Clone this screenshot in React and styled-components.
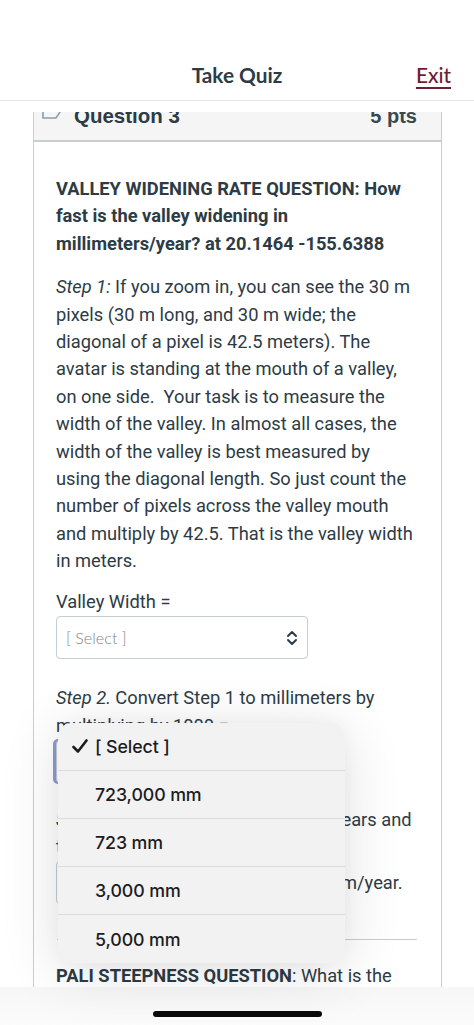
import React from 'react'
import styled, { createGlobalStyle } from 'styled-components'

const GlobalStyle = createGlobalStyle`
  html, body {
    margin: 0;
    padding: 0;
    background: #ffffff;
  }
  * {
    box-sizing: border-box;
  }
`

const Screen = styled.div`
  position: relative;
  width: 474px;
  height: 1025px;
  display: flex;
  flex-direction: column;
  overflow: hidden;
  background: #ffffff;
  color: #2d3b45;
`

const StatusSpace = styled.div`
  height: 50px;
  flex-shrink: 0;
`

const Header = styled.header`
  height: 51px;
  flex-shrink: 0;
  display: grid;
  grid-template-columns: 1fr auto 1fr;
  align-items: center;
  padding: 0 23px 0 23px;
  border-bottom: 1px solid #e4e6e8;
`

const HeaderTitle = styled.h1`
  grid-column: 2;
  margin: 0;
  font-family: Lato, 'Liberation Sans', sans-serif;
  font-weight: 700;
  font-size: 20.8px;
  color: #2d3b45;
  padding-bottom: 1px;
`

const ExitLink = styled.a`
  grid-column: 3;
  justify-self: end;
  font-family: Lato, 'Liberation Sans', sans-serif;
  font-size: 20.8px;
  font-weight: 500;
  color: #6f1d30;
  text-decoration: underline;
  text-decoration-thickness: 2px;
  text-underline-offset: 4px;
  padding-bottom: 1px;
`

const Gutter = styled.div`
  height: 11px;
  flex-shrink: 0;
  background: #ffffff;
`

const Viewport = styled.main`
  flex: 1;
  overflow: hidden;
`

/* content is scrolled: the top of the question header sits under the bar */
const Scrolled = styled.div`
  margin-top: -20px;
`

const Card = styled.section`
  margin: 0 32px 0 33px;
  border: 1px solid #c7cdd1;
  border-bottom: none;
`

const CardHeader = styled.div`
  height: 49px;
  display: flex;
  align-items: center;
  gap: 10px;
  padding: 0 24px 1px 8px;
  background: #f5f5f5;
  border-bottom: 2px solid #c7cdd1;
  font-family: 'Liberation Sans', Arial, sans-serif;
  font-weight: 700;
  font-size: 20.5px;
  color: #2d3b45;
`

const QuestionName = styled.span`
  flex: 1;
`

const Points = styled.span`
  font-size: 20px;
  color: #3b4850;
`

const CardBody = styled.div`
  padding: 33px 24px 0 22px;
  font-family: Roboto, 'Liberation Sans', sans-serif;
  font-size: 18.3px;
  line-height: 27.4px;
  color: #2d3b45;
`

const Para = styled.p`
  margin: 0 0 ${(p) => p.$gap ?? 15}px;
  font-weight: ${(p) => (p.$bold ? 700 : 400)};
`

const Label = styled.div`
  margin-bottom: 1px;
`

const SelectBox = styled.div`
  width: ${(p) => p.$width}px;
  height: 43px;
  flex-shrink: 0;
  display: ${(p) => (p.$inline ? 'inline-flex' : 'flex')};
  align-items: center;
  justify-content: space-between;
  padding: 0 9px 0 9px;
  border: 1px solid #c7cdd1;
  border-radius: 4px;
  background: #ffffff;
  font-family: Lato, 'Liberation Sans', sans-serif;
  font-size: 16.2px;
  font-weight: 300;
  color: #7f858a;
  vertical-align: middle;
  box-shadow: ${(p) => (p.$focused ? '-2px 0 0 1px #8a9bd6' : 'none')};
  margin-bottom: ${(p) => p.$after ?? 0}px;
`

const InlineRow = styled.div`
  display: flex;
  align-items: center;
  gap: 12px;
  margin-bottom: 35px;
`

const Rule = styled.hr`
  border: none;
  border-top: 1px solid #c7cdd1;
  margin: 0 0 22px 1px;
`

const Strong = styled.strong`
  font-weight: 700;
`

const Menu = styled.ul`
  position: absolute;
  left: 58px;
  top: 723px;
  width: 287px;
  margin: 0;
  padding: 0;
  list-style: none;
  border-radius: 14px;
  background: #f2f2f3;
  box-shadow: 0 8px 60px rgba(0, 0, 0, 0.12), 0 0 18px rgba(0, 0, 0, 0.04);
  overflow: hidden;
`

const MenuItem = styled.li`
  height: 48px;
  display: flex;
  align-items: center;
  padding-left: 14px;
  gap: 7px;
  border-bottom: ${(p) => (p.$last ? 'none' : '1px solid #dcdcde')};
  font-family: Inter, 'Liberation Sans', sans-serif;
  font-size: 17.8px;
  font-weight: 500;
  color: #1c1c1e;
  letter-spacing: -0.1px;
`

const CheckSlot = styled.span`
  width: 16px;
  display: flex;
  justify-content: center;
`

const BottomBar = styled.div`
  height: 38px;
  flex-shrink: 0;
  display: flex;
  justify-content: center;
  align-items: flex-end;
  padding-bottom: 8px;
  background: linear-gradient(#f7f7f7, #fbfbfb);
`

const HomeIndicator = styled.div`
  width: 169px;
  height: 6px;
  border-radius: 3px;
  background: #0a0a0a;
`

const FlagIcon = () => (
  <svg width="22" height="22" viewBox="0 0 22 22" fill="none">
    <path d="M1 0 V13 H14 L20 4" stroke="#8d9ca8" strokeWidth="1.6" />
  </svg>
)

const UpDownIcon = () => (
  <svg width="12" height="16" viewBox="0 0 12 16" fill="none">
    <polyline points="2,6 6,2 10,6" stroke="#2d3b45" strokeWidth="2" strokeLinecap="round" strokeLinejoin="round" />
    <polyline points="2,10 6,14 10,10" stroke="#2d3b45" strokeWidth="2" strokeLinecap="round" strokeLinejoin="round" />
  </svg>
)

const CheckIcon = () => (
  <svg width="16" height="15" viewBox="0 0 16 15" fill="none">
    <path d="M1.5 8 L6 12.5 L14.5 1.5" stroke="#1c1c1e" strokeWidth="2.6" strokeLinecap="round" strokeLinejoin="round" />
  </svg>
)

const options = ['[ Select ]', '723,000 mm', '723 mm', '3,000 mm', '5,000 mm']

export default function App() {
  return (
    <Screen>
      <GlobalStyle />
      <StatusSpace />
      <Header>
        <HeaderTitle>Take Quiz</HeaderTitle>
        <ExitLink>Exit</ExitLink>
      </Header>
      <Gutter />
      <Viewport>
        <Scrolled>
          <Card>
            <CardHeader>
              <FlagIcon />
              <QuestionName>Question 3</QuestionName>
              <Points>5 pts</Points>
            </CardHeader>
            <CardBody>
              <Para $bold $gap={16}>
                VALLEY WIDENING RATE QUESTION: How fast is the valley widening in millimeters/year? at 20.1464 -155.6388
              </Para>
              <Para $gap={13}>
                <em>Step 1:</em> If you zoom in, you can see the 30 m pixels (30 m long, and 30 m wide; the diagonal of a
                pixel is 42.5 meters). The avatar is standing at the mouth of a valley, on one side.&nbsp; Your task is to
                measure the width of the valley. In almost all cases, the width of the valley is best measured by using the
                diagonal length. So just count the number of pixels across the valley mouth and multiply by 42.5. That is
                the valley width in meters.
              </Para>
              <Label>Valley Width =</Label>
              <SelectBox $width={252} $after={25}>
                <span>[ Select ]</span>
                <UpDownIcon />
              </SelectBox>
              <Para $gap={1}>
                <em>Step 2.</em> Convert Step 1 to millimeters by multiplying by 1000 =
              </Para>
              <SelectBox $width={252} $after={23} $focused>
                <span>[ Select ]</span>
                <UpDownIcon />
              </SelectBox>
              <Para $gap={0}>
                <em>Step 3.</em> Divide Step 2 by the age in years and
                <br />
                then round the result =
              </Para>
              <InlineRow>
                <SelectBox $width={257} $inline>
                  <span>[ Select ]</span>
                  <UpDownIcon />
                </SelectBox>
                <span>mm/year.</span>
              </InlineRow>
              <Rule />
              <Para>
                <Strong>PALI STEEPNESS QUESTION</Strong>: What is the steepness of the pali?
              </Para>
            </CardBody>
          </Card>
        </Scrolled>
      </Viewport>
      <BottomBar>
        <HomeIndicator />
      </BottomBar>
      <Menu>
        {options.map((opt, i) => (
          <MenuItem key={opt} $last={i === options.length - 1}>
            <CheckSlot>{i === 0 && <CheckIcon />}</CheckSlot>
            {opt}
          </MenuItem>
        ))}
      </Menu>
    </Screen>
  )
}
